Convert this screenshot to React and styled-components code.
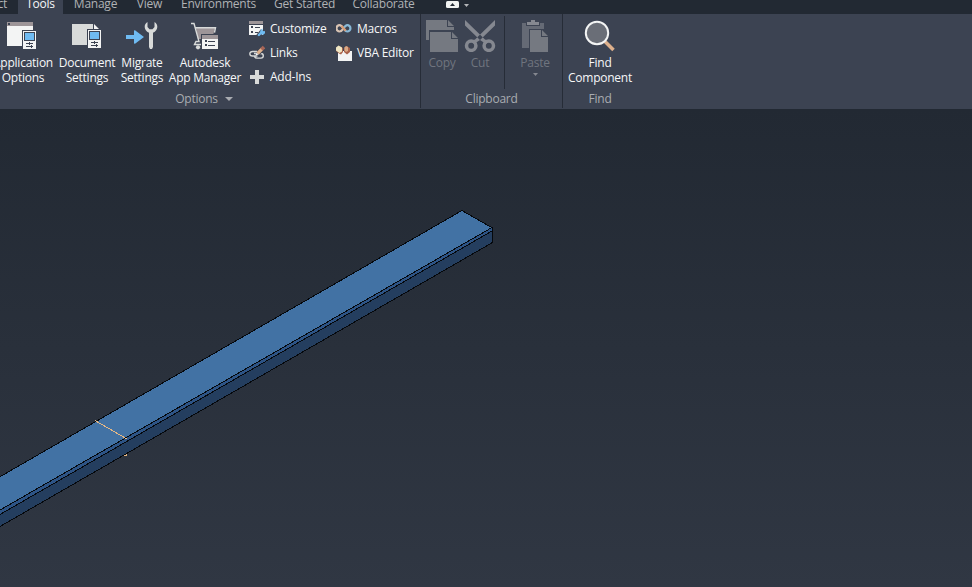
import React from "react";
import styled, { createGlobalStyle } from "styled-components";

const GlobalStyle = createGlobalStyle`
  * { box-sizing: border-box; }
  html, body { margin: 0; padding: 0; background: #222933; overflow: hidden; }
`;

const Window = styled.div`
  display: flex;
  flex-direction: column;
  width: 972px;
  height: 587px;
  overflow: hidden;
  font-family: "Open Sans", "Noto Sans", sans-serif;
  font-size: 12px;
  letter-spacing: -0.24px;
  color: #f6f7f8;
`;

const TabBar = styled.nav`
  display: flex;
  flex: none;
  height: 14px;
  background: #222933;
  overflow: hidden;
`;

const Tab = styled.div`
  display: flex;
  justify-content: ${(p) => (p.$clipped ? "flex-end" : "center")};
  flex: none;
  width: ${(p) => p.$width}px;
  height: 18px;
  margin-top: -4px;
  padding-right: ${(p) => (p.$clipped ? 11 : 0)}px;
  line-height: 16px;
  white-space: nowrap;
  color: ${(p) => (p.$active ? "#f6f7f8" : "#b0b2b5")};
  background: ${(p) => (p.$active ? "#3c4352" : "transparent")};
`;

const TabExtras = styled.div`
  display: flex;
  align-items: flex-start;
  gap: 5px;
  padding: 1px 0 0 22px;
`;

const Ribbon = styled.div`
  display: flex;
  flex: none;
  height: 95px;
  background: #3c4352;
`;

const Panel = styled.section`
  display: flex;
  flex-direction: column;
  flex: none;
  width: ${(p) => p.$width}px;
  height: 94px;
  border-right: ${(p) => (p.$last ? "none" : "1px solid #262c37")};
`;

const PanelBody = styled.div`
  display: flex;
  flex: none;
  height: 77px;
  padding-left: ${(p) => p.$indent || 0}px;
`;

const PanelTitle = styled.div`
  display: flex;
  align-items: center;
  justify-content: center;
  gap: 7px;
  height: 16px;
  line-height: 16px;
  padding-right: ${(p) => p.$pull || 0}px;
  color: #a9acb1;
`;

const LargeButton = styled.div`
  display: flex;
  flex-direction: column;
  align-items: center;
  flex: none;
  width: ${(p) => p.$width}px;
  margin-left: ${(p) => p.$offset || 0}px;
  padding-top: 6px;
  color: ${(p) => (p.$disabled ? "#70757f" : "#f6f7f8")};
`;

const Label = styled.div`
  margin-top: 3px;
  line-height: 15px;
  text-align: center;
  white-space: pre;
`;

const Separator = styled.div`
  flex: none;
  width: 1px;
  height: 73px;
  margin: 2px 0 0 ${(p) => p.$offset}px;
  background: #262c37;
`;

const SmallColumn = styled.div`
  display: flex;
  flex-direction: column;
  flex: none;
  width: ${(p) => p.$width}px;
  padding: 3px 0 0 4px;
`;

const SmallButton = styled.div`
  display: flex;
  align-items: center;
  gap: 5px;
  height: 24px;
  white-space: nowrap;
`;

const SmallLabel = styled.span`
  line-height: 16px;
`;

const Viewport = styled.main`
  flex: 1;
  background: linear-gradient(#222933, #303743);
`;

const Icon = styled.svg`
  display: block;
  flex: none;
`;

const Large = ({ children }) => (
  <Icon width="32" height="32" viewBox="0 0 32 32">{children}</Icon>
);
const Small = ({ children }) => (
  <Icon width="16" height="16" viewBox="0 0 16 16">{children}</Icon>
);

const bg = "#3c4352";
const white = "#f3f4f4";
const gray = "#d8dad9";

const SettingsCard = ({ x, y }) => (
  <g transform={`translate(${x} ${y})`}>
    <path fill={bg} d="M-1-1h15v20h-15z" />
    <path fill={white} d="M0 0h13v18H0z" />
    <path fill={bg} d="M1 1h11v9H1z" />
    <path fill="#6fbbf2" d="M2 2h9v7H2z" />
    <path fill={bg} d="M3 12h7v1H3zM6 11h1v3H6zM3 15h7v1H3zM8 14h1v3H8z" />
  </g>
);

const ApplicationIcon = () => (
  <Large>
    <path fill="#9d9598" d="M0 2h26v4H0z" />
    <path fill={bg} d="M1 3h2v2H1z" />
    <path fill={white} d="M0 6h26v20H0z" />
    <SettingsCard x={16} y={11} />
  </Large>
);

const DocumentIcon = () => (
  <Large>
    <path fill={gray} d="M1 4h21v21H1z" />
    <path fill={white} d="M23 4l5 5h-5z" />
    <SettingsCard x={17} y={10} />
  </Large>
);

const MigrateIcon = () => (
  <Large>
    <path fill="#6fbbf2" d="M0 15h8v-4.500l1-.2 9 6.700-9 6.700-1-.2V19H0z" />
    <path fill={gray} d="M21.500 2v5l2 2.200h3L28.500 7V2c2 1 2.900 3 2.800 5-.1 2.500-1.500 4.500-4.300 5.800V27l-1 2h-2l-1-2V12.800c-2.800-1.300-4.200-3.300-4.300-5.800-.1-2 .8-4 2.800-5z" />
  </Large>
);

const AppManagerIcon = () => (
  <Large>
    <path fill="#9d9598" d="M7 8h19l-3 11H9z" />
    <path fill="none" stroke={gray} strokeWidth="1.400" d="M2 3.500h3l5 18H7l-1.500 3H14M6.200 7.700H26.500l-1 5" />
    <circle cx="9" cy="27.300" r="2.100" fill={gray} />
    <path fill={bg} d="M12 14h18v16H12z" />
    <path fill="#9d9598" d="M13 15h16v4H13z" />
    <path fill={white} d="M13 19h16v10H13z" />
    <path fill={bg} d="M16 20h2v2h-2zM19 21h7v1h-7zM16 24h2v2h-2zM19 25h7v1h-7z" />
  </Large>
);

const CustomizeIcon = () => (
  <Small>
    <path fill="#9d9598" d="M0 0h14v3H0z" />
    <path fill={white} d="M0 4h14v10H0z" />
    <path fill={bg} d="M2 5h2v2H2zM6 6h5v1H6zM2 10h2v2H2zM6 11h3v1H6z" />
    <path fill="none" stroke={bg} strokeWidth="4" d="M9 15l4.500-5.500" />
    <path fill="none" stroke="#6fbbf2" strokeWidth="2.400" strokeLinecap="round" d="M9.800 14l3.200-3.200" />
    <path fill="#6fbbf2" d="M11 12.500l.5-3.500 2-1.500v2.500l2 .2 1-1-.5 3-2 1.800z" />
  </Small>
);

const LinksIcon = () => (
  <Small>
    <path fill="none" stroke={gray} strokeWidth="1.400" d="M8 6.500H3.500a2.600 2.200 0 0 0 0 4.500H8.500M5 8.500H12a2.300 2.300 0 0 1 0 4.600H8c-2 0-2.500-.7-2.500-2" />
    <path stroke={bg} strokeWidth="4" d="M8 9.500l6.500-6" />
    <path stroke="#ddb08c" strokeWidth="3.200" d="M8.500 8.500l4.500-4.500" />
    <path stroke="#a76556" strokeWidth="3.600" d="M12.500 4.500L15 2" />
    <path fill={white} d="M6.500 10.500l1-3 2 2z" />
  </Small>
);

const AddIcon = () => (
  <Small><path fill={gray} d="M6 1h4v5h5v4h-5v5H6v-5H1V6h5z" /></Small>
);

const MacrosIcon = () => (
  <Small>
    <g fill="none" strokeWidth="2.200" transform="translate(0 -0.500)">
      <path stroke="#d8c3b3" d="M7.500 8C5.500 5 4.500 4.700 3.600 4.700a3 3 0 0 0 0 6.300C5 11 6 10 7.500 8" />
      <path stroke="#89b9d7" d="M7.500 8C9 5.500 10 4.700 11.300 4.700a3 3 0 0 1 0 6.300C10 11 9 10.200 7.500 8" />
      <path stroke="#d99c75" d="M5.500 5.500l4.200 4.700" />
    </g>
  </Small>
);

const VbaIcon = () => (
  <Small>
    <path fill={white} d="M2 6h14v10H2z" />
    <path fill="#a86149" d="M0 3l3-2 4 2v4L5 9.500 3 8.500 0 6zM8 3l2.500-2L14 3v4l-3 2.500L8 7z" />
    <path fill="#efe6c4" d="M0 2.500L2.500.5 6 2.500v4L3.500 8 0 5.500z" />
    <path fill="#d8a987" d="M8.500 2.500l1.500-1.500 2 1v4l-2 1-1.500-1.500z" />
  </Small>
);

const CopyIcon = () => (
  <Large>
    <g fill="#757981">
      <path d="M0 0h21v7h7v3H3v10H0zM22 0l6 6h-6z" />
      <path d="M4 12h21v7h7v13H4zM26 12l6 6h-6z" />
    </g>
  </Large>
);

const CutIcon = () => (
  <Large>
    <path fill="#858890" d="M1 0l20 19.500 4 1.500-3 3-6-4L1 5.500zM31 0L11 19.500 7 21l3 3 6-4L31 5.500z" />
    <g fill="none" stroke="#858890" strokeWidth="3.500">
      <circle cx="7.200" cy="25.700" r="4.700" />
      <circle cx="24.800" cy="25.700" r="4.700" />
    </g>
  </Large>
);

const PasteIcon = () => (
  <Large>
    <path fill="#656a75" d="M3 3h22v25H3z" />
    <path fill={bg} d="M7 2h14v4H7zM10 9h20v23H10z" />
    <path fill="#858890" d="M8 2h4V0h4v2h4v3H8z" />
    <path fill="#757981" d="M11 10h11v7h7v15H11zM23 10l6 6h-6z" />
  </Large>
);

const FindIcon = () => (
  <Large>
    <path stroke="#ddb08c" strokeWidth="3.500" d="M21 21.500l8.500 8.500" />
    <circle cx="13" cy="13" r="11.200" fill="#6a6e77" stroke={white} strokeWidth="2" />
  </Large>
);

const Caret = ({ width, height, color }) => (
  <Icon width={width} height={height} viewBox="0 0 8 4" preserveAspectRatio="none">
    <path fill={color} d="M0 0h8L4 4z" />
  </Icon>
);

const CaretSlot = styled.div`
  padding-top: 3px;
`;

const SmallItem = ({ icon, children }) => (
  <SmallButton>{icon}<SmallLabel>{children}</SmallLabel></SmallButton>
);

const Beam = () => (
  <Icon width="972" height="478" viewBox="0 109 972 478" shapeRendering="crispEdges">
    <path fill="#4272a4" d="M0 477L462 210.500 492 228 0 510z" />
    <path fill="#2d5486" d="M0 510L492 228V231L0 515z" />
    <path fill="#243e5f" d="M0 515L492 231V243L0 526.500z" />
    <g fill="none" stroke="#05080c" strokeWidth="1">
      <path d="M0 476.700L462 210.500 492.500 228V242.500L0 526.500" />
      <path d="M0 510L492 227.500M0 514.500L492 231" />
    </g>
    <path fill="none" stroke="#e4b785" strokeWidth="1" d="M95 420.500L127 439M124 455.500h3M126.500 454v2" />
  </Icon>
);

export default function App() {
  return (
    <Window>
      <GlobalStyle />
      <TabBar>
        <Tab $width={18} $clipped>ct</Tab>
        <Tab $width={45} $active>Tools</Tab>
        <Tab $width={65}>Manage</Tab>
        <Tab $width={43}>View</Tab>
        <Tab $width={95}>Environments</Tab>
        <Tab $width={77}>Get Started</Tab>
        <Tab $width={81}>Collaborate</Tab>
        <TabExtras>
          <Icon width="13" height="7" viewBox="0 0 13 7">
            <rect width="13" height="7" rx="1.500" fill="#f0f2f1" />
            <path fill="#222933" d="M4 5l2.500-3L9 5z" />
          </Icon>
          <CaretSlot><Caret width={5} height={3} color="#b4b6b9" /></CaretSlot>
        </TabExtras>
      </TabBar>
      <Ribbon>
        <Panel $width={421}>
          <PanelBody>
            <LargeButton $width={64} $offset={-9}><ApplicationIcon /><Label>{"Application\nOptions"}</Label></LargeButton>
            <LargeButton $width={64}><DocumentIcon /><Label>{"Document\nSettings"}</Label></LargeButton>
            <LargeButton $width={46}><MigrateIcon /><Label>{"Migrate\nSettings"}</Label></LargeButton>
            <LargeButton $width={80}><AppManagerIcon /><Label>{"Autodesk\nApp Manager"}</Label></LargeButton>
            <SmallColumn $width={87}>
              <SmallItem icon={<CustomizeIcon />}>Customize</SmallItem>
              <SmallItem icon={<LinksIcon />}>Links</SmallItem>
              <SmallItem icon={<AddIcon />}>Add-Ins</SmallItem>
            </SmallColumn>
            <SmallColumn $width={86}>
              <SmallItem icon={<MacrosIcon />}>Macros</SmallItem>
              <SmallItem icon={<VbaIcon />}>VBA Editor</SmallItem>
            </SmallColumn>
          </PanelBody>
          <PanelTitle $pull={12}>Options<Caret width={8} height={4} color="#a9acb1" /></PanelTitle>
        </Panel>
        <Panel $width={142}>
          <PanelBody $indent={2}>
            <LargeButton $width={38} $disabled><CopyIcon /><Label>Copy</Label></LargeButton>
            <LargeButton $width={38} $disabled><CutIcon /><Label>Cut</Label></LargeButton>
            <Separator $offset={5} />
            <LargeButton $width={60} $disabled>
              <PasteIcon />
              <Label>Paste</Label>
              <CaretSlot><Caret width={5} height={3} color="#858890" /></CaretSlot>
            </LargeButton>
          </PanelBody>
          <PanelTitle>Clipboard</PanelTitle>
        </Panel>
        <Panel $width={74} $last>
          <PanelBody>
            <LargeButton $width={74}><FindIcon /><Label>{"Find\nComponent"}</Label></LargeButton>
          </PanelBody>
          <PanelTitle>Find</PanelTitle>
        </Panel>
      </Ribbon>
      <Viewport><Beam /></Viewport>
    </Window>
  );
}
